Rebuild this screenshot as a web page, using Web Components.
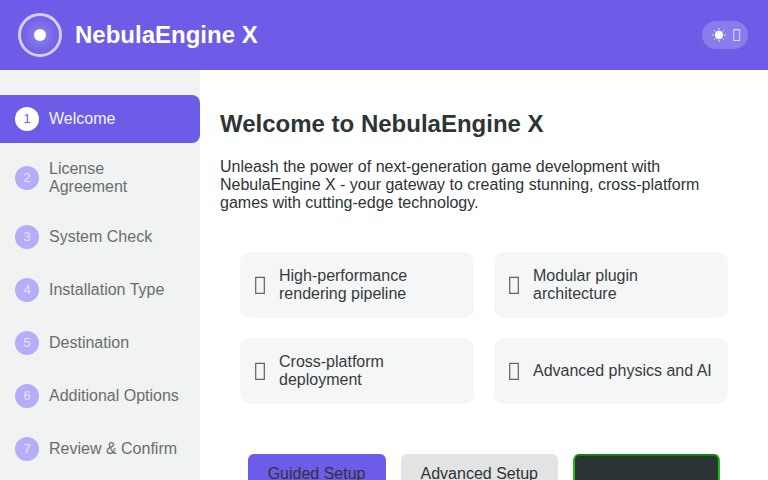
<!DOCTYPE html>
<html>
<head>
<meta charset="utf-8">
<title>NebulaEngine X</title>
<style>
html, body { margin: 0; height: 100%; overflow: hidden; }
body { font-family: "Liberation Sans", Arial, sans-serif; color: #2d3436; }
</style>
</head>
<body>
<installer-app>
  <app-header slot="header" title="NebulaEngine X"></app-header>
  <step-list slot="side">
    <step-item num="1" active>Welcome</step-item>
    <step-item num="2">License Agreement</step-item>
    <step-item num="3">System Check</step-item>
    <step-item num="4">Installation Type</step-item>
    <step-item num="5">Destination</step-item>
    <step-item num="6">Additional Options</step-item>
    <step-item num="7">Review &amp; Confirm</step-item>
  </step-list>
  <welcome-page slot="main">
    <feature-card>High-performance rendering pipeline</feature-card>
    <feature-card>Modular plugin architecture</feature-card>
    <feature-card>Cross-platform deployment</feature-card>
    <feature-card>Advanced physics and AI</feature-card>
    <setup-button slot="actions" kind="primary">Guided Setup</setup-button>
    <setup-button slot="actions" kind="secondary">Advanced Setup</setup-button>
    <setup-button slot="actions" kind="dark">Custom Setup</setup-button>
  </welcome-page>
</installer-app>
<script>
// icons in the reference are missing-glyph boxes, a private use char gives the same box
const MISSING = "\uE000";

class InstallerApp extends HTMLElement {
  constructor() {
    super();
    this.attachShadow({ mode: "open" });
    this.shadowRoot.innerHTML = `
<style>
:host { display: flex; flex-direction: column; height: 100vh; overflow: hidden; }
.body { display: flex; flex: 1; min-height: 0; }
aside { width: 200px; flex: none; background: #f1f2f2; padding-top: 25px; box-sizing: border-box; }
main { flex: 1; background: #fff; padding: 20px; min-width: 0; overflow: hidden; }
</style>
<slot name="header"></slot>
<div class="body">
  <aside><slot name="side"></slot></aside>
  <main><slot name="main"></slot></main>
</div>`;
  }
}

class AppHeader extends HTMLElement {
  constructor() {
    super();
    this.attachShadow({ mode: "open" });
    this.shadowRoot.innerHTML = `
<style>
:host { display: flex; align-items: center; justify-content: space-between; height: 70px; flex: none; background: #6c5ce7; color: #fff; padding: 0 20px 0 18px; }
.brand { display: flex; align-items: center; gap: 13px; }
.logo { width: 44px; height: 44px; flex: none; }
h1 { margin: 0; font-size: 24px; font-weight: 700; }
.theme { display: flex; align-items: center; gap: 6px; height: 28px; padding: 0 6.4px 0 10px; border-radius: 14px; background: rgba(255,255,255,.2); font-size: 16px; }
.sun { width: 14px; height: 14px; flex: none; }
.moon { font-family: "Noto Sans"; line-height: 18px; opacity: .8; }
</style>
<div class="brand">
  <svg class="logo" viewBox="0 0 44 44">
    <defs><radialGradient id="g"><stop offset="0" stop-color="#fff" stop-opacity=".25"/><stop offset="1" stop-color="#fff" stop-opacity="0"/></radialGradient></defs>
    <circle cx="22" cy="22" r="20.5" fill="url(#g)" stroke="#fff" stroke-opacity=".7" stroke-width="3"/>
    <circle cx="22" cy="22" r="6" fill="#fff"/>
  </svg>
  <h1>${this.getAttribute("title")}</h1>
</div>
<div class="theme">
  <svg class="sun" viewBox="0 0 14 14">
    <circle cx="7" cy="7" r="4.2" fill="#fff"/>
    <path d="M7 0v2M7 12v2M0 7h2M12 7h2M2 2l1.4 1.4M10.6 10.6 12 12M2 12l1.4-1.4M10.6 3.4 12 2" stroke="#fff" stroke-opacity=".75" stroke-width="1"/>
  </svg>
  <span class="moon">${MISSING}</span>
</div>`;
  }
}

class StepList extends HTMLElement {
  constructor() {
    super();
    this.attachShadow({ mode: "open" });
    this.shadowRoot.innerHTML = `
<style>:host { display: flex; flex-direction: column; gap: 5px; }</style>
<slot></slot>`;
  }
}

class StepItem extends HTMLElement {
  constructor() {
    super();
    this.attachShadow({ mode: "open" });
    this.shadowRoot.innerHTML = `
<style>
:host { display: flex; align-items: center; gap: 10px; padding: 12px 20px 12px 15px; color: #686e70; font-size: 16px; line-height: 18px; }
:host([active]) { background: #6c5ce7; color: #f4f3fd; border-radius: 0 8px 8px 0; }
.num { width: 24px; height: 24px; flex: none; border-radius: 50%; background: #b4aef8; color: #e4e2fc; display: grid; place-items: center; font-size: 12.8px; }
:host([active]) .num { background: #fff; color: #6c5ce7; }
</style>
<span class="num">${this.getAttribute("num")}</span>
<span><slot></slot></span>`;
  }
}

class WelcomePage extends HTMLElement {
  constructor() {
    super();
    this.attachShadow({ mode: "open" });
    this.shadowRoot.innerHTML = `
<style>
:host { display: block; }
h2 { margin: 0; padding-top: 20px; font-size: 24px; line-height: 28px; color: #2d3436; }
p { margin: 20px 0 0; font-size: 16px; line-height: 18px; color: #2d3436; }
.grid { display: grid; grid-template-columns: 1fr 1fr; gap: 20px; margin: 40px 20px 0; }
.actions { display: flex; justify-content: center; gap: 15px; margin-top: 50px; }
</style>
<h2>Welcome to NebulaEngine X</h2>
<p>Unleash the power of next-generation game development with NebulaEngine X - your gateway to creating stunning, cross-platform games with cutting-edge technology.</p>
<div class="grid"><slot></slot></div>
<div class="actions"><slot name="actions"></slot></div>`;
  }
}

class FeatureCard extends HTMLElement {
  constructor() {
    super();
    this.attachShadow({ mode: "open" });
    this.shadowRoot.innerHTML = `
<style>
:host { display: flex; align-items: center; gap: 13px; padding: 15px; background: #f5f6f6; border-radius: 10px; font-size: 16px; line-height: 18px; color: #363c3e; }
.icon { font-family: "Noto Sans"; font-size: 24px; line-height: 28px; color: #666; flex: none; width: 13px; margin-left: -2px; will-change: transform; }
</style>
<span class="icon">${MISSING}</span>
<span><slot></slot></span>`;
  }
}

class SetupButton extends HTMLElement {
  constructor() {
    super();
    this.attachShadow({ mode: "open" });
    this.shadowRoot.innerHTML = `
<style>
:host { display: block; padding: 11px 20px 10px; border-radius: 6px; font-size: 16px; line-height: 18px; white-space: nowrap; }
:host([kind=primary]) { background: #6c5ce7; color: #2d3436; }
:host([kind=secondary]) { background: #e2e3e3; color: #2d3436; }
:host([kind=dark]) { background: #2d3436; color: #2d3436; padding: 9px 21px 8px; border: 2px solid #18c018; border-top-color: #0a8a0a; }
</style>
<slot></slot>`;
  }
}

customElements.define("installer-app", InstallerApp);
customElements.define("app-header", AppHeader);
customElements.define("step-list", StepList);
customElements.define("step-item", StepItem);
customElements.define("welcome-page", WelcomePage);
customElements.define("feature-card", FeatureCard);
customElements.define("setup-button", SetupButton);
</script>
</body>
</html>
